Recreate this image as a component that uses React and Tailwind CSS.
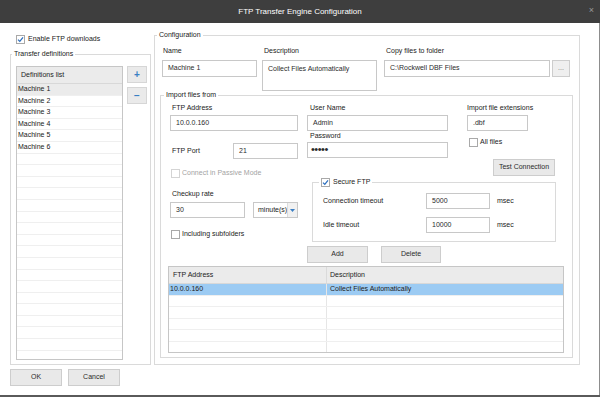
import React from "react";

const Check = ({ checked, disabled }) => (
  <span
    className={`w-[9px] h-[9px] shrink-0 border flex items-center justify-center bg-white ${
      disabled ? "border-[#d4d4d4]" : "border-[#a9a9a9]"
    }`}
  >
    {checked && (
      <svg width="7" height="7" viewBox="0 0 7 7">
        <path d="M1 3.6 L2.8 5.4 L6 1.4" fill="none" stroke="#2c6fbf" strokeWidth="1.3" />
      </svg>
    )}
  </span>
);

const Field = ({ className = "", children }) => (
  <div
    className={`h-[16px] border border-[#c8c8c8] bg-white px-[5px] flex items-center text-[7px] text-[#2b2b2b] ${className}`}
  >
    {children}
  </div>
);

const Btn = ({ className = "", children }) => (
  <div
    className={`h-[17px] border border-[#cdcdcd] bg-[#e9e9e9] flex items-center justify-center text-[7px] text-[#2b2b2b] ${className}`}
  >
    {children}
  </div>
);

const Label = ({ className = "", children }) => (
  <div className={`h-[10px] leading-[10px] text-[7px] text-[#222] ${className}`}>{children}</div>
);

export default function App() {
  const listRows = Array.from({ length: 24 }, (_, i) => (i < 6 ? `Machine ${i + 1}` : ""));
  const tableRows = Array.from({ length: 6 }, (_, i) => i);

  return (
    <div className="w-[600px] h-[397px] bg-white flex flex-col overflow-hidden font-['Liberation_Sans',Arial,sans-serif] text-[#222]">
      {/* title bar */}
      <div className="h-[23px] bg-[#3e3e3e] relative flex items-center justify-center shrink-0">
        <span className="text-white text-[8px]">FTP Transfer Engine Configuration</span>
        <span className="absolute right-[6px] top-[6px] text-[#9a9a9a] text-[9px] leading-[9px]">×</span>
      </div>

      <div className="flex-1 flex flex-col border-r border-[#8d8d8d]">
        <div className="flex pl-[10px] items-start">
          {/* left column */}
          <div className="w-[141px] flex flex-col">
            <div className="mt-[12px] h-[9px] flex items-center gap-[3px] pl-[6px]">
              <Check checked />
              <span className="text-[7px]">Enable FTP downloads</span>
            </div>
            <fieldset className="mt-[5px] h-[316px] border border-[#dadada] p-0 m-0 min-w-0">
              <legend className="ml-[1px] px-[2px] h-[10px] leading-[10px] text-[7px]">Transfer definitions</legend>
              <div className="flex gap-[4px] pl-[5px] pt-[7px]">
                <div className="w-[107px] h-[294px] border border-[#c6c6c6] flex flex-col overflow-hidden">
                  <div className="h-[17px] shrink-0 bg-[#ebebeb] border-b border-[#d8d8d8] flex items-center pl-[4px] text-[7px]">
                    Definitions list
                  </div>
                  {listRows.map((r, i) => (
                    <div
                      key={i}
                      className={`h-[11.6px] shrink-0 border-b border-[#efefef] flex items-center pl-[1px] text-[7px] ${
                        i === 0 ? "bg-[#ebebeb]" : ""
                      }`}
                    >
                      {r}
                    </div>
                  ))}
                </div>
                <div className="flex flex-col gap-[4px]">
                  <div className="w-[20px] h-[17px] bg-[#eaeaea] border border-[#d6d6d6] flex items-center justify-center text-[#3a7fc4] text-[10px] font-bold leading-none">
                    +
                  </div>
                  <div className="w-[20px] h-[17px] bg-[#eaeaea] border border-[#d6d6d6] flex items-center justify-center text-[#3a7fc4] text-[10px] font-bold leading-none">
                    −
                  </div>
                </div>
              </div>
            </fieldset>
          </div>

          {/* configuration */}
          <fieldset className="ml-[3px] mt-[7px] w-[426px] h-[335px] border border-[#dadada] p-0 m-0 min-w-0">
            <legend className="ml-[2px] px-[2px] h-[10px] leading-[10px] text-[7px]">Configuration</legend>
            <div className="pl-[7px] pt-[6px] flex flex-col">
              <div className="flex items-start">
                <div className="w-[95px] flex flex-col">
                  <Label className="pl-[1px] mb-[4px]">Name</Label>
                  <Field className="h-[17px]">Machine 1</Field>
                </div>
                <div className="w-[115px] ml-[5px] flex flex-col">
                  <Label className="pl-[2px] mb-[4px]">Description</Label>
                  <div className="h-[31px] border border-[#c8c8c8] px-[5px] pt-[3px] text-[7px] text-[#2b2b2b]">
                    Collect Files Automatically
                  </div>
                </div>
                <div className="ml-[7px] flex flex-col">
                  <Label className="pl-[2px] mb-[4px]">Copy files to folder</Label>
                  <div className="flex gap-[2px]">
                    <Field className="w-[166px] h-[17px]">C:\Rockwell DBF Files</Field>
                    <Btn className="w-[18px] bg-[#efefef] text-[#777]">...</Btn>
                  </div>
                </div>
              </div>

              {/* import files from */}
              <fieldset className="ml-[-2px] mt-[-1px] w-[413px] h-[268px] border border-[#dadada] p-0 m-0 min-w-0">
                <legend className="ml-[3px] px-[2px] h-[10px] leading-[10px] text-[7px]">Import files from</legend>
                <div className="pl-[9px] pt-[3px] flex flex-col">
                  <div className="flex items-start">
                    {/* column A */}
                    <div className="w-[128px] flex flex-col">
                      <Label className="pl-[2px] mb-[2px]">FTP Address</Label>
                      <Field>10.0.0.160</Field>
                      <div className="mt-[12px] flex items-center">
                        <span className="w-[63px] pl-[2px] text-[7px]">FTP Port</span>
                        <Field className="w-[65px]">21</Field>
                      </div>
                      <div className="mt-[10px] h-[9px] flex items-center gap-[2px] pl-[1px]">
                        <Check disabled />
                        <span className="text-[7px] text-[#a3a3a3]">Connect in Passive Mode</span>
                      </div>
                      <Label className="mt-[11px] pl-[2px]">Checkup rate</Label>
                      <div className="mt-[3px] flex">
                        <Field className="w-[75px]">30</Field>
                        <div className="ml-[8px] w-[45px] h-[16px] border border-[#c8c8c8] flex">
                          <div className="w-[33px] overflow-hidden whitespace-nowrap text-[7px] leading-[14px] pl-[4px]">
                            minute(s)
                          </div>
                          <div className="flex-1 bg-[#f1f1f1] border-l border-[#dcdcdc] flex items-center justify-center">
                            <svg width="5" height="3" viewBox="0 0 5 3">
                              <path d="M0 0 H5 L2.5 3 Z" fill="#3a7fc4" />
                            </svg>
                          </div>
                        </div>
                      </div>
                      <div className="mt-[12px] h-[9px] flex items-center gap-[2px] pl-[1px]">
                        <Check />
                        <span className="text-[7px]">Including subfolders</span>
                      </div>
                    </div>

                    {/* column B */}
                    <div className="ml-[9px] w-[249px] flex flex-col">
                      <div className="flex items-start">
                        <div className="w-[141px] flex flex-col">
                          <Label className="pl-[3px] mb-[2px]">User Name</Label>
                          <Field>Admin</Field>
                          <div className="mt-[1px] h-[8px] leading-[8px] pl-[3px] text-[7px]">Password</div>
                          <Field className="mt-[2px] text-[11px] leading-none tracking-[-0.5px] pl-[3px]">
                            <span className="-mt-[1px]">•••••</span>
                          </Field>
                        </div>
                        <div className="ml-[19px] w-[61px] flex flex-col">
                          <Label className="mb-[2px] whitespace-nowrap">Import file extensions</Label>
                          <Field>.dbf</Field>
                          <div className="mt-[7px] h-[9px] flex items-center gap-[2px] pl-[2px]">
                            <Check />
                            <span className="text-[7px]">All files</span>
                          </div>
                        </div>
                      </div>
                      <Btn className="self-end mr-[1px] mt-[1px] w-[62px] h-[16px]">Test Connection</Btn>
                      <fieldset className="ml-[5px] mt-[1px] w-[244px] h-[65px] border border-[#dadada] p-0 m-0 min-w-0">
                        <legend className="ml-[6px] px-[2px] h-[10px] flex items-center gap-[3px] text-[7px]">
                          <Check checked />
                          <span>Secure FTP</span>
                        </legend>
                        <div className="pl-[10px] pt-[6px] flex flex-col gap-[8px]">
                          <div className="flex items-center">
                            <span className="w-[103px] text-[7px]">Connection timeout</span>
                            <Field className="w-[64px]">5000</Field>
                            <span className="ml-[7px] text-[7px]">msec</span>
                          </div>
                          <div className="flex items-center">
                            <span className="w-[103px] text-[7px]">Idle timeout</span>
                            <Field className="w-[64px]">10000</Field>
                            <span className="ml-[7px] text-[7px]">msec</span>
                          </div>
                        </div>
                      </fieldset>
                      <div className="mt-[4px] flex gap-[13px]">
                        <Btn className="w-[61px]">Add</Btn>
                        <Btn className="w-[60px]">Delete</Btn>
                      </div>
                    </div>
                  </div>

                  {/* table */}
                  <div className="ml-[-2px] mt-[3px] w-[396px] h-[87px] border border-[#c6c6c6] flex flex-col overflow-hidden">
                    <div className="h-[17px] shrink-0 bg-[#ebebeb] border-b border-[#d8d8d8] flex text-[7px]">
                      <div className="w-[158px] pl-[4px] flex items-center border-r border-[#dadada]">FTP Address</div>
                      <div className="flex-1 pl-[3px] flex items-center">Description</div>
                    </div>
                    {tableRows.map((i) => (
                      <div
                        key={i}
                        className={`h-[11.6px] shrink-0 flex text-[7px] border-b border-[#efefef] ${
                          i === 0 ? "bg-[#9ccbf3]" : ""
                        }`}
                      >
                        <div className="w-[158px] pl-[1px] flex items-center border-r border-[#e6e6e6]">
                          {i === 0 ? "10.0.0.160" : ""}
                        </div>
                        <div className="flex-1 pl-[3px] flex items-center">
                          {i === 0 ? "Collect Files Automatically" : ""}
                        </div>
                      </div>
                    ))}
                  </div>
                </div>
              </fieldset>
            </div>
          </fieldset>
        </div>

        {/* OK / Cancel */}
        <div className="flex gap-[6px] pl-[10px] mt-[4px]">
          <Btn className="w-[52px]">OK</Btn>
          <Btn className="w-[52px]">Cancel</Btn>
        </div>
      </div>
      <div className="h-[2px] bg-[#5a5a5a] shrink-0" />
    </div>
  );
}
